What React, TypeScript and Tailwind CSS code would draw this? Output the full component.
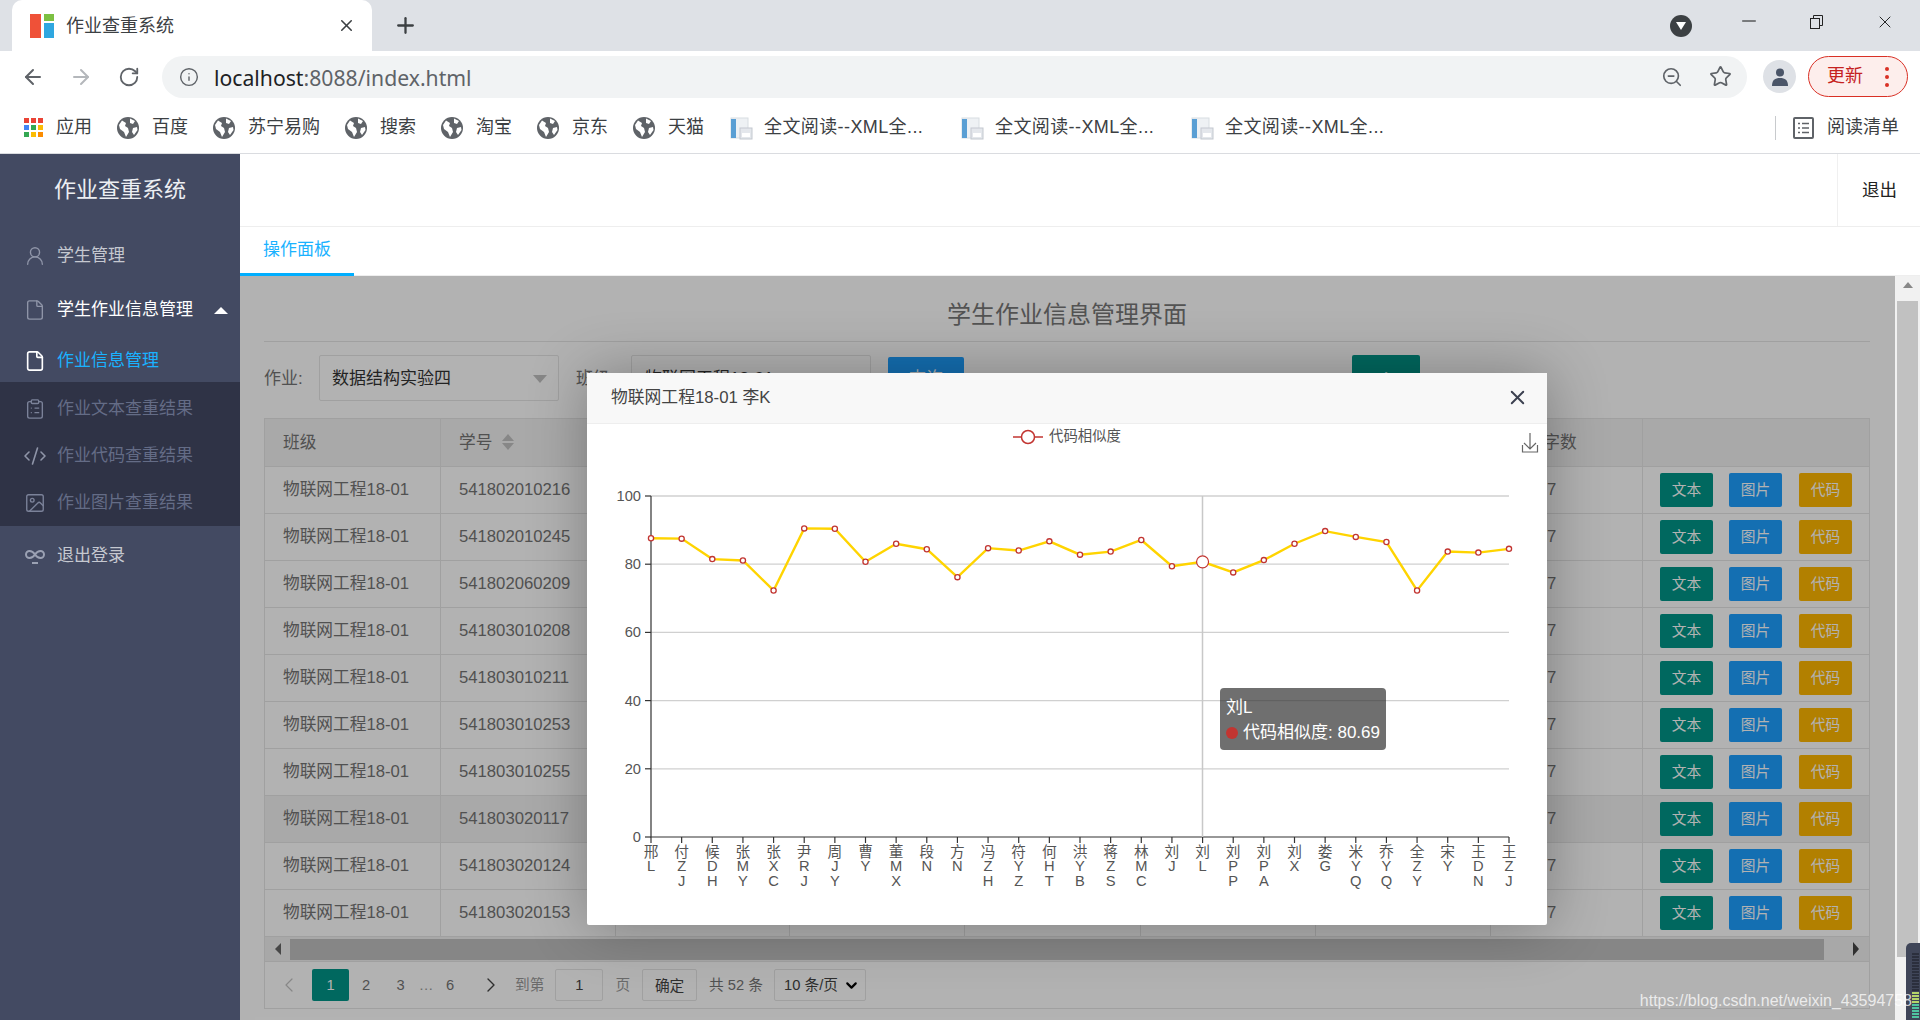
import {
  ArrowLeft,
  ArrowRight,
  ChevronDown,
  ChevronLeft,
  ChevronRight,
  ClipboardList,
  CodeXml,
  File,
  Image,
  Info,
  Minus,
  Plus,
  RotateCw,
  Star,
  UserRound,
  X,
  ZoomOut,
} from "lucide-react";

const rows = [
  "541802010216",
  "541802010245",
  "541802060209",
  "541803010208",
  "541803010211",
  "541803010253",
  "541803010255",
  "541803020117",
  "541803020124",
  "541803020153",
];

const points: [string[], number][] = [
  [["邢", "L"], 87.6],
  [["付", "Z", "J"], 87.5],
  [["候", "D", "H"], 81.5],
  [["张", "M", "Y"], 81.1],
  [["张", "X", "C"], 72.3],
  [["尹", "R", "J"], 90.5],
  [["周", "J", "Y"], 90.4],
  [["曹", "Y"], 80.7],
  [["董", "M", "X"], 86],
  [["段", "N"], 84.4],
  [["方", "N"], 76.2],
  [["冯", "Z", "H"], 84.7],
  [["符", "Y", "Z"], 84],
  [["何", "H", "T"], 86.7],
  [["洪", "Y", "B"], 82.8],
  [["蒋", "Z", "S"], 83.7],
  [["林", "M", "C"], 87.1],
  [["刘", "J"], 79.4],
  [["刘", "L"], 80.69],
  [["刘", "P", "P"], 77.6],
  [["刘", "P", "A"], 81.2],
  [["刘", "X"], 86],
  [["娄", "G"], 89.7],
  [["米", "Y", "Q"], 88],
  [["乔", "Y", "Q"], 86.5],
  [["全", "Z", "Y"], 72.3],
  [["宋", "Y"], 83.7],
  [["王", "D", "N"], 83.4],
  [["王", "Z", "J"], 84.5],
];

const px = (i: number) => 651 + (i * 858) / 28;
const py = (v: number) => 837 - v * 3.41;

function Globe() {
  return (
    <svg width="22" height="22" viewBox="0 0 22 22" className="shrink-0">
      <circle cx="11" cy="11" r="11" fill="#5f6368" />
      <path d="M5 3.5 9 6 8 9l3 2 1 4-3 5-2-5-4-3-1-4z" fill="#fff" />
      <path d="M13 1.5 18 4l-2 3-3-1zM16 11l4-1 .5 3-3.5 5-2-3z" fill="#fff" />
    </svg>
  );
}

function DocIcon() {
  return (
    <svg width="24" height="24" viewBox="0 0 24 24" className="shrink-0">
      <rect x="2" y="2" width="17" height="20" fill="#eef1f4" stroke="#d8dde2" />
      <rect x="2" y="3" width="5" height="19" fill="#5a9fd4" />
      <rect x="11" y="12" width="12" height="11" fill="#e4e7ec" stroke="#c3c8cf" />
      <rect x="13" y="17" width="8" height="4" fill="#fff" />
    </svg>
  );
}

function Bookmark({ label }: { label: string }) {
  return (
    <div className="flex items-center gap-[13px]">
      <Globe />
      <span>{label}</span>
    </div>
  );
}

function DocBookmark({ width }: { width: string }) {
  return (
    <div className={`flex items-center gap-[11px] ${width}`}>
      <DocIcon />
      <span className="whitespace-nowrap tracking-[0.4px]">全文阅读--XML全...</span>
    </div>
  );
}

function BrowserChrome() {
  return (
    <div className="shrink-0 bg-white">
      <div className="h-[51px] bg-[#dee1e6] flex items-end relative">
        <div className="ml-[12px] w-[360px] h-[51px] bg-white rounded-t-[10px] flex items-center pl-[18px] pr-[16px]">
          <div className="w-[24px] h-[24px] flex gap-[3px] shrink-0">
            <div className="w-[11px] bg-[#ef5138]" />
            <div className="w-[10px] flex flex-col gap-[2px]">
              <div className="h-[7px] bg-[#7cc042]" />
              <div className="flex-1 bg-[#2fa7e0]" />
            </div>
          </div>
          <span className="ml-[12px] pt-[2px] text-[18px] text-[#3c4043] flex-1">作业查重系统</span>
          <X size={19} strokeWidth={2} className="text-[#3c4043]" />
        </div>
        <Plus size={25} strokeWidth={2.2} className="text-[#3c4043] ml-[21px] mb-[13px]" />
        <div className="ml-auto flex items-center h-full">
          <div className="w-[22px] h-[22px] rounded-full bg-[#3c4043] flex items-center justify-center mr-[46px]">
            <div className="w-0 h-0 border-x-[5px] border-x-transparent border-t-[8px] border-t-white" />
          </div>
          <Minus size={22} strokeWidth={1} className="text-black mr-[49px] -mt-[10px]" />
          <svg width="16" height="16" viewBox="0 0 16 16" className="mr-[50px] -mt-[8px]" fill="none" stroke="#222">
            <rect x="1.5" y="4.5" width="9" height="10" />
            <path d="M4.5 4.5v-3h9v10h-3" />
          </svg>
          <X size={20} strokeWidth={1} className="text-black mr-[25px] -mt-[8px]" />
        </div>
      </div>

      <div className="h-[51px] flex items-center">
        <ArrowLeft size={24} strokeWidth={2} className="text-[#5f6368] ml-[21px]" />
        <ArrowRight size={24} strokeWidth={2} className="text-[#b4b7bb] ml-[24px]" />
        <RotateCw size={22} strokeWidth={2} className="text-[#5f6368] ml-[25px]" />
        <div className="ml-[22px] w-[1585px] h-[42px] bg-[#f1f3f4] rounded-full flex items-center pl-[17px] pr-[15px]">
          <Info size={20} strokeWidth={1.7} className="text-[#5f6368]" />
          <span className="ml-[15px] pt-[2px] text-[21.2px] font-['Noto_Sans',sans-serif] text-[#5f6368]">
            <span className="text-[#202124]">localhost</span>:8088/index.html
          </span>
          <ZoomOut size={22} strokeWidth={1.8} className="text-[#5f6368] ml-auto mr-[26px]" />
          <Star size={23} strokeWidth={1.8} className="text-[#5f6368]" />
        </div>
        <div className="ml-[16px] w-[33px] h-[33px] rounded-full bg-[#dee1e6] flex items-center justify-center">
          <svg width="20" height="20" viewBox="0 0 20 20" fill="#4a5568">
            <circle cx="10" cy="5.5" r="4" />
            <path d="M2 19c0-6 3-8 8-8s8 2 8 8z" />
          </svg>
        </div>
        <div className="ml-[12px] w-[100px] h-[41px] rounded-full border-[1.5px] border-[#d93025] bg-[#fdeeec] flex items-center pl-[18px]">
          <span className="text-[18px] text-[#c5221f]">更新</span>
          <div className="ml-[22px] flex flex-col gap-[4px]">
            <div className="w-[4px] h-[4px] rounded-full bg-[#d93025]" />
            <div className="w-[4px] h-[4px] rounded-full bg-[#d93025]" />
            <div className="w-[4px] h-[4px] rounded-full bg-[#d93025]" />
          </div>
        </div>
      </div>

      <div className="h-[52px] flex items-center border-b border-[#dadce0] text-[18px] text-[#3c4043]">
        <div className="ml-[24px] flex items-center gap-[13px]">
          <div className="w-[19px] h-[19px] grid grid-cols-3 gap-[2px]">
            {["#ea4335", "#ea4335", "#ea4335", "#4285f4", "#34a853", "#fbbc05", "#34a853", "#fbbc05", "#fb8c00"].map((c, i) => (
              <div key={i} style={{ background: c }} />
            ))}
          </div>
          <span>应用</span>
        </div>
        <div className="ml-[25px] flex items-center gap-[25px]">
          <Bookmark label="百度" />
          <Bookmark label="苏宁易购" />
          <Bookmark label="搜索" />
          <Bookmark label="淘宝" />
          <Bookmark label="京东" />
          <Bookmark label="天猫" />
          <DocBookmark width="w-[231px]" />
        </div>
        <DocBookmark width="w-[230px]" />
        <DocBookmark width="w-[200px]" />
        <div className="ml-auto flex items-center">
          <div className="w-px h-[24px] bg-[#c8cacd] mr-[17px]" />
          <svg width="21" height="22" viewBox="0 0 21 22" fill="none" stroke="#5f6368" strokeWidth="2">
            <rect x="1" y="1" width="19" height="20" rx="1" />
            <path d="M5 6.5h2M9 6.5h7M5 11h2M9 11h7M5 15.5h2M9 15.5h7" strokeWidth="1.6" />
          </svg>
          <span className="ml-[13px] mr-[21px]">阅读清单</span>
        </div>
      </div>
    </div>
  );
}

function Sidebar() {
  return (
    <aside className="w-[240px] shrink-0 bg-[#434a62] text-[17px] text-[#c5c8d0]">
      <div className="h-[75px] flex items-center justify-center pb-[5px] text-[22px] text-[#eceef2]">作业查重系统</div>
      <div className="h-[54px] flex items-center">
        <UserRound size={22} strokeWidth={1.5} className="ml-[24px] text-[#8f95a8]" />
        <span className="ml-[11px]">学生管理</span>
      </div>
      <div className="h-[54px] flex items-center text-white">
        <File size={22} strokeWidth={1.5} className="ml-[24px] text-[#8f95a8]" />
        <span className="ml-[11px]">学生作业信息管理</span>
        <div className="ml-[21px] w-0 h-0 border-x-[7px] border-x-transparent border-b-[7px] border-b-white" />
      </div>
      <div className="h-[45px] flex items-center pt-[2px] text-[#1ab2ff]">
        <File size={22} strokeWidth={1.8} className="ml-[24px] text-white" />
        <span className="ml-[11px]">作业信息管理</span>
      </div>
      <div className="h-[144px] bg-[#2f3346] text-[#646c86] flex flex-col pt-[3px]">
        <div className="h-[48px] flex items-center">
          <ClipboardList size={22} strokeWidth={1.5} className="ml-[24px] text-[#7b8299]" />
          <span className="ml-[11px]">作业文本查重结果</span>
        </div>
        <div className="h-[48px] flex items-center">
          <CodeXml size={24} strokeWidth={1.6} className="ml-[23px] text-[#8f95a8]" />
          <span className="ml-[10px]">作业代码查重结果</span>
        </div>
        <div className="h-[48px] flex items-center">
          <Image size={22} strokeWidth={1.5} className="ml-[24px] text-[#7b8299]" />
          <span className="ml-[11px]">作业图片查重结果</span>
        </div>
      </div>
      <div className="h-[58px] pt-[2px] flex items-center">
        <svg width="22" height="22" viewBox="0 0 22 22" fill="none" stroke="#9ba1b3" strokeWidth="2" className="ml-[24px]">
          <path d="M11 9.5C9 6.5 7.5 6 5.5 6a3.5 3.5 0 0 0 0 7c2 0 3.500-.5 5.500-3.500s3.500-3.500 5.500-3.500a3.500 3.500 0 0 1 0 7c-2 0-3.500-.5-5.500-3.500z" />
          <path d="M8 18h6" />
        </svg>
        <span className="ml-[11px]">退出登录</span>
      </div>
    </aside>
  );
}

function Filters() {
  return (
    <div className="mt-[13px] h-[46px] flex text-[17px] text-[#757575]">
      <span className="w-[55px] flex items-center pt-[1px]">作业:</span>
      <div className="w-[240px] h-[46px] border border-[#e6e6e6] rounded-[2px] bg-white flex items-center pl-[12px] pt-[1px] text-[#333]">
        数据结构实验四
        <div className="ml-auto mr-[11px] w-0 h-0 border-x-[7px] border-x-transparent border-t-[8px] border-t-[#c2c2c2]" />
      </div>
      <span className="ml-[17px] w-[55px] flex items-center pt-[1px]">班级:</span>
      <div className="w-[240px] h-[46px] border border-[#e6e6e6] rounded-[2px] bg-white flex items-center pl-[13px] pt-[1px] text-[#333]">物联网工程18-01</div>
      <div className="ml-[17px] mt-[2px] w-[76px] h-[44px] bg-[#1e9fff] rounded-[2px] text-white flex items-center justify-center">查询</div>
      <div className="ml-[388px] w-[68px] h-[46px] bg-[#009688] rounded-[2px] text-white text-[26px] flex items-center justify-center">+</div>
    </div>
  );
}

const btn = "w-[53px] h-[34px] rounded-[2px] text-white text-[14.7px] flex items-center justify-center";

function DataTable() {
  return (
    <table className="mt-[17px] w-[1606px] table-fixed border-collapse text-[16.7px] text-[#757575]">
      <colgroup>
        <col className="w-[176px]" />
        <col className="w-[175px]" />
        <col className="w-[174px]" />
        <col className="w-[175px]" />
        <col className="w-[176px]" />
        <col className="w-[175px]" />
        <col className="w-[175px]" />
        <col className="w-[152px]" />
        <col />
      </colgroup>
      <thead>
        <tr className="h-[48px] bg-[#f2f2f2] text-left font-normal">
          <th className="border border-[#e6e6e6] pl-[18px] font-normal">班级</th>
          <th className="border border-[#e6e6e6] pl-[18px] font-normal">
            <div className="flex items-center gap-[10px]">
              学号
              <div className="flex flex-col gap-[2px]">
                <div className="w-0 h-0 border-x-[6px] border-x-transparent border-b-[7px] border-b-[#c2c2c2]" />
                <div className="w-0 h-0 border-x-[6px] border-x-transparent border-t-[7px] border-t-[#c2c2c2]" />
              </div>
            </div>
          </th>
          <th className="border border-[#e6e6e6]" />
          <th className="border border-[#e6e6e6]" />
          <th className="border border-[#e6e6e6]" />
          <th className="border border-[#e6e6e6]" />
          <th className="border border-[#e6e6e6]" />
          <th className="border border-[#e6e6e6] pl-[19px] font-normal">文本字数</th>
          <th className="border border-[#e6e6e6]" />
        </tr>
      </thead>
      <tbody>
        {rows.map((id, i) => (
          <tr key={id} className={i === 7 ? "h-[47px] bg-[#f2f2f2]" : "h-[47px]"}>
            <td className="border border-[#e6e6e6] pl-[18px]">物联网工程18-01</td>
            <td className="border border-[#e6e6e6] pl-[18px]">{id}</td>
            <td className="border border-[#e6e6e6]" />
            <td className="border border-[#e6e6e6]" />
            <td className="border border-[#e6e6e6]" />
            <td className="border border-[#e6e6e6]" />
            <td className="border border-[#e6e6e6]" />
            <td className="border border-[#e6e6e6] pl-[19px]">18877</td>
            <td className="border border-[#e6e6e6] pl-[17px]">
              <div className="flex">
                <div className={`${btn} bg-[#009688]`}>文本</div>
                <div className={`${btn} ml-[16px] bg-[#1e9fff]`}>图片</div>
                <div className={`${btn} ml-[17px] bg-[#ffb800]`}>代码</div>
              </div>
            </td>
          </tr>
        ))}
      </tbody>
    </table>
  );
}

function Pager() {
  return (
    <>
      <div className="w-[1606px] h-[24px] bg-[#f1f1f1] border-x border-[#e6e6e6] flex items-center">
        <div className="w-[25px] flex justify-center">
          <div className="w-0 h-0 border-y-[6px] border-y-transparent border-r-[6px] border-r-[#666]" />
        </div>
        <div className="w-[1534px] h-[21px] bg-[#c1c1c1]" />
        <div className="ml-[29px] w-0 h-0 border-y-[7px] border-y-transparent border-l-[6px] border-l-[#444]" />
      </div>
      <div className="w-[1606px] h-[48px] border border-[#e6e6e6] flex items-center text-[14.7px] text-[#757575]">
        <div className="w-[47px] flex justify-center">
          <ChevronLeft size={24} strokeWidth={1.2} className="text-[#c2c2c2]" />
        </div>
        <div className="w-[37px] h-[32px] bg-[#009688] rounded-[2px] text-white flex items-center justify-center">1</div>
        <div className="w-[34px] text-center">2</div>
        <div className="w-[35px] text-center">3</div>
        <div className="w-[16px] text-center text-[#999]">…</div>
        <div className="w-[32px] text-center">6</div>
        <div className="w-[49px] flex justify-center">
          <ChevronRight size={24} strokeWidth={1.4} className="text-[#444]" />
        </div>
        <span className="text-[#999]">到第</span>
        <div className="ml-[11px] w-[48px] h-[32px] border border-[#e6e6e6] rounded-[2px] flex items-center justify-center text-[#444]">1</div>
        <span className="ml-[12px] text-[#999]">页</span>
        <div className="ml-[12px] w-[55px] h-[32px] border border-[#e6e6e6] rounded-[2px] flex items-center justify-center pt-[2px] text-[#444]">确定</div>
        <span className="ml-[12px] w-[65px]">共 52 条</span>
        <div className="w-[92px] h-[32px] border border-[#e6e6e6] rounded-[2px] flex items-center pl-[9px] text-[#444]">
          10 条/页
          <ChevronDown size={17} strokeWidth={3} className="ml-auto mr-[5px] text-black" />
        </div>
      </div>
    </>
  );
}

function Chart() {
  const line = points.map(([, v], i) => `${px(i)},${py(v)}`).join(" ");
  return (
    <svg viewBox="587 424 960 501" className="w-[960px] h-[501px]">
      <path d="M1013 437h30" stroke="#c23531" strokeWidth="1.5" />
      <circle cx="1028" cy="437" r="6.500" fill="#fff" stroke="#c23531" strokeWidth="1.5" />
      <text x="1049" y="441" fontSize="14.4" fill="#555">
        代码相似度
      </text>
      <g fill="none" stroke="#666" strokeWidth="1.200">
        <path d="M1530 433v16M1524 443l6 6 6-6M1522.500 445v7h15v-7" />
      </g>
      {[0, 20, 40, 60, 80, 100].map((v) => (
        <g key={v}>
          {v > 0 && <path d={`M651 ${py(v)}H1509`} stroke="#d0d0d0" strokeWidth="1.300" />}
          <path d={`M645 ${py(v)}H651`} stroke="#333" strokeWidth="1.200" />
          <text x="641" y={py(v) + 5} textAnchor="end" fontSize="14.700" fill="#555">
            {v}
          </text>
        </g>
      ))}
      <path d="M651 496V837H1509" fill="none" stroke="#333" strokeWidth="1.200" />
      <path d="M1202.500 496V837" stroke="#c8c8c8" strokeWidth="1.500" />
      {points.map(([name], i) => (
        <g key={i}>
          <path d={`M${px(i)} 837v6`} stroke="#333" strokeWidth="1.200" />
          {name.map((t, j) => (
            <text key={j} x={px(i)} y={857 + j * 14.300} textAnchor="middle" fontSize="14.700" fill="#555">
              {t}
            </text>
          ))}
        </g>
      ))}
      <polyline points={line} fill="none" stroke="#ffd400" strokeWidth="2.400" />
      {points.map(([, v], i) =>
        i === 18 ? (
          <circle key={i} cx={px(i)} cy={py(v)} r="6" fill="#fff" stroke="#c23531" strokeWidth="1.200" />
        ) : (
          <circle key={i} cx={px(i)} cy={py(v)} r="2.600" fill="#fff" stroke="#c23531" strokeWidth="1.300" />
        ),
      )}
    </svg>
  );
}

function ChartDialog() {
  return (
    <div className="absolute left-[347px] top-[97px] w-[960px] h-[552px] bg-white rounded-[2px] shadow-[1px_1px_60px_rgba(0,0,0,0.3)]">
      <div className="h-[51px] bg-[#f8f8f8] border-b border-[#eee] flex items-center pl-[24px] pr-[18px] pb-[1px] text-[16.8px] text-[#444]">
        物联网工程18-01 李K
        <X size={23} strokeWidth={2} className="ml-auto text-[#3c4050]" />
      </div>
      <div className="relative">
        <Chart />
        <div className="absolute left-[633px] top-[264px] w-[166px] h-[62px] rounded-[4px] bg-[rgba(50,50,50,0.7)] text-white text-[17px] leading-[25px] pl-[6px] pt-[6px]">
          <div className="pt-[1px]">刘L</div>
          <div className="flex items-center gap-[5px] whitespace-nowrap">
            <div className="w-[12px] h-[12px] rounded-full bg-[#c23531]" />
            代码相似度: 80.69
          </div>
        </div>
      </div>
    </div>
  );
}

export default function App() {
  return (
    <div className="relative w-[1920px] h-[1020px] overflow-hidden flex flex-col bg-white font-['Liberation_Sans','Noto_Sans_CJK_SC',sans-serif]">
      <BrowserChrome />
      <div className="flex-1 flex min-h-0">
        <Sidebar />
        <div className="flex-1 flex flex-col min-w-0">
          <div className="h-[73px] shrink-0 border-b border-[#eee] flex justify-end">
            <div className="w-[83px] border-l border-[#f0f0f0] flex items-center pl-[24px] text-[17.500px] text-[#222]">退出</div>
          </div>
          <div className="h-[49px] shrink-0 border-b border-[#eee]">
            <div className="w-[114px] h-[49px] border-b-[3px] border-[#00aeff] flex items-center justify-center text-[17px] text-[#1ab2ff]">操作面板</div>
          </div>
          <div className="flex-1 flex min-h-0">
            <div className="relative flex-1 min-w-0 pl-[24px] overflow-hidden">
              <div className="w-[1606px] h-[66px] pt-[12px] border-b border-[#e6e6e6] flex items-center justify-center text-[24px] text-[#777]">学生作业信息管理界面</div>
              <Filters />
              <DataTable />
              <Pager />
              <div className="absolute inset-0 bg-black/30" />
              <ChartDialog />
            </div>
            <div className="w-[25px] shrink-0 bg-[#f1f1f1] flex flex-col items-center pt-[4px]">
              <div className="mt-[2px] w-0 h-0 border-x-[5px] border-x-transparent border-b-[6px] border-b-[#888]" />
              <div className="mt-[13px] w-[21px] h-[656px] bg-[#c1c1c1]" />
            </div>
          </div>
        </div>
      </div>
      <div className="absolute right-0 bottom-0 w-[14px] h-[77px] rounded-tl-[5px] bg-[#3f4558]">
        <svg width="14" height="77" viewBox="0 0 14 77">
          {Array.from({ length: 22 }, (_, i) => (
            <rect key={i} x="6" y={10 + i * 3} width="7" height="2" fill={i < 13 ? "#2b2f3d" : i < 17 ? "#b5d56a" : "#4fc3a1"} />
          ))}
        </svg>
      </div>
      <div className="absolute right-[8px] bottom-[7px] text-[16px] text-white/75 font-['Liberation_Sans',sans-serif]">
        https://blog.csdn.net/weixin_43594758
      </div>
    </div>
  );
}
